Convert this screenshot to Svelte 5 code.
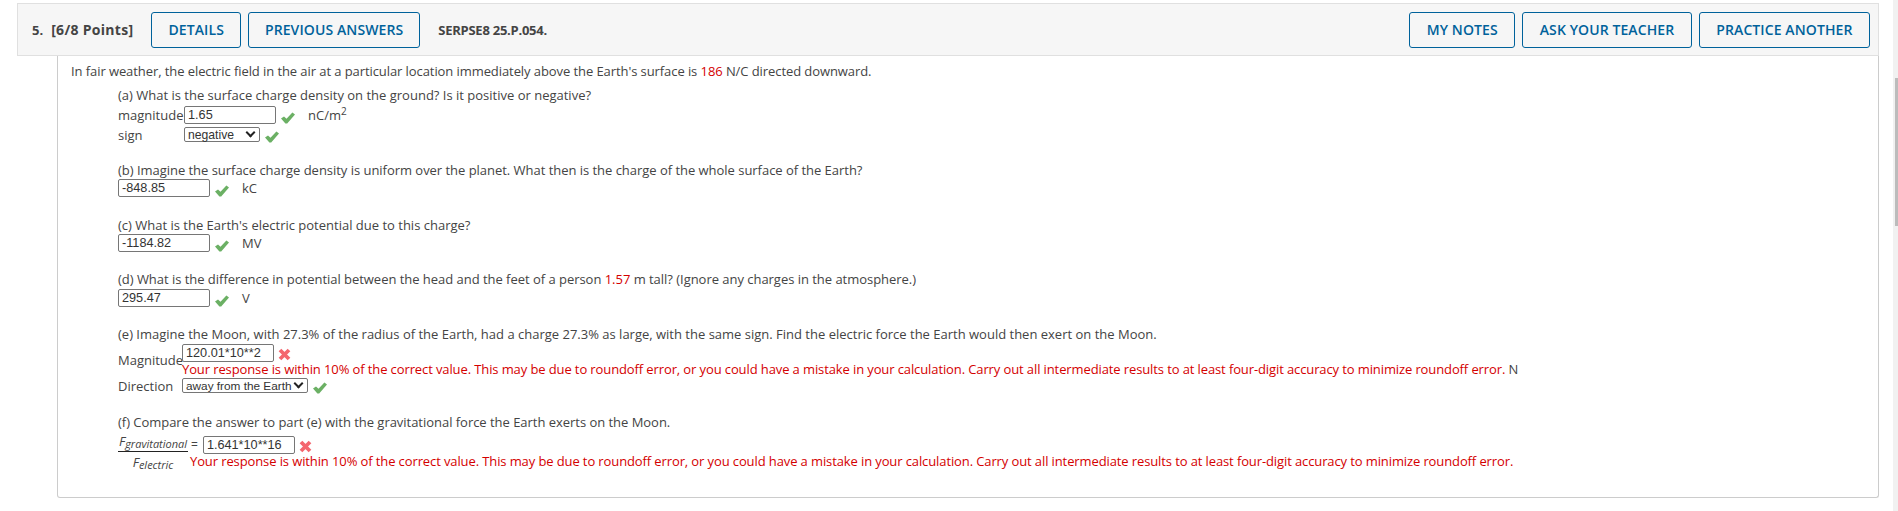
<script>
	const errorText =
		"Your response is within 10% of the correct value. This may be due to roundoff error, or you could have a mistake in your calculation. Carry out all intermediate results to at least four-digit accuracy to minimize roundoff error.";
</script>

{#snippet check()}
	<svg class="mark ok" width="14" height="12" viewBox="0 0 14 12">
		<path d="M0 6.6 L3 4.4 L5.5 6.8 L11.4 0.4 L14 2.4 L6.2 11.6 L4.4 11.6 Z" fill="#6bb064" />
	</svg>
{/snippet}

{#snippet cross()}
	<svg class="mark bad" width="13" height="13" viewBox="0 0 13 13">
		<path d="M2 2 L11 11 M11 2 L2 11" stroke="#f4666e" stroke-width="3.8" />
	</svg>
{/snippet}

<div class="page">
	<main>
		<header>
			<span class="num">5.</span>
			<span class="points">[6/8 Points]</span>
			<button class="details">DETAILS</button>
			<button class="prev">PREVIOUS ANSWERS</button>
			<span class="code">SERPSE8 25.P.054.</span>
			<div class="actions">
				<button>MY NOTES</button>
				<button>ASK YOUR TEACHER</button>
				<button>PRACTICE ANOTHER</button>
			</div>
		</header>

		<section class="body">
			<p class="intro">
				In fair weather, the electric field in the air at a particular location immediately above the Earth's surface is <span class="red">186</span> N/C directed downward.
			</p>

			<div class="part a">
				<p>(a) What is the surface charge density on the ground? Is it positive or negative?</p>
				<div class="row mag-row">
					<span class="label">magnitude</span>
					<span class="input">1.65</span>
					{@render check()}
					<span class="unit">nC/m<sup>2</sup></span>
				</div>
				<div class="row sign-row">
					<span class="label">sign</span>
					<span class="select w-76">negative<i class="caret"></i></span>
					{@render check()}
				</div>
			</div>

			<div class="part b">
				<p>(b) Imagine the surface charge density is uniform over the planet. What then is the charge of the whole surface of the Earth?</p>
				<div class="row tight">
					<span class="input">-848.85</span>
					{@render check()}
					<span class="unit">kC</span>
				</div>
			</div>

			<div class="part c">
				<p>(c) What is the Earth's electric potential due to this charge?</p>
				<div class="row tight">
					<span class="input">-1184.82</span>
					{@render check()}
					<span class="unit">MV</span>
				</div>
			</div>

			<div class="part d">
				<p>(d) What is the difference in potential between the head and the feet of a person <span class="red">1.57</span> m tall? (Ignore any charges in the atmosphere.)</p>
				<div class="row">
					<span class="input">295.47</span>
					{@render check()}
					<span class="unit">V</span>
				</div>
			</div>

			<div class="part e">
				<p>(e) Imagine the Moon, with 27.3% of the radius of the Earth, had a charge 27.3% as large, with the same sign. Find the electric force the Earth would then exert on the Moon.</p>
				<div class="answer">
					<span class="label mag">Magnitude</span>
					<div>
						<div class="inline">
							<span class="input">120.01*10**2</span>
							{@render cross()}
						</div>
						<div class="error">{errorText} <span class="n">N</span></div>
					</div>
				</div>
				<div class="row dir">
					<span class="label">Direction</span>
					<span class="select w-126">away from the Earth<i class="caret"></i></span>
					{@render check()}
				</div>
			</div>

			<div class="part f">
				<p>(f) Compare the answer to part (e) with the gravitational force the Earth exerts on the Moon.</p>
				<div class="fraction-row">
					<div class="fraction">
						<div class="top"><i>F<sub>gravitational</sub></i></div>
						<div class="bottom"><i>F<sub>electric</sub></i></div>
					</div>
					<div>
						<div class="inline">
							<span class="eq">=</span>
							<span class="input">1.641*10**16</span>
							{@render cross()}
						</div>
						<div class="error two">{errorText}</div>
					</div>
				</div>
			</div>
		</section>
	</main>
	<aside class="scrollbar"><div class="thumb"></div></aside>
</div>

<style>
	:global(body) {
		margin: 0;
		background: #fff;
	}
	.page {
		display: flex;
		height: 511px;
		overflow: hidden;
		font-family: "Open Sans", sans-serif;
		font-size: 13px;
		line-height: 18px;
		color: #444;
	}
	main {
		flex: 1;
		padding: 3px 14px 0 17px;
	}
	header {
		display: flex;
		align-items: center;
		height: 53px;
		box-sizing: border-box;
		padding: 0 8px 0 14px;
		background: #f6f6f6;
		border: 1px solid #e0e0e0;
		color: #444;
	}
	.num {
		font-size: 13px;
		font-weight: 700;
		margin-right: 8px;
	}
	.points {
		font-size: 14px;
		font-weight: 700;
		letter-spacing: 0.3px;
		margin-right: 18px;
	}
	.details {
		margin-right: 7px;
	}
	.details,
	.prev {
		padding: 0 16px;
	}
	.code {
		font-size: 13px;
		font-weight: 700;
		letter-spacing: -0.25px;
		margin-left: 18px;
	}
	.actions {
		margin-left: auto;
		display: flex;
		gap: 7px;
	}
	button {
		height: 36px;
		padding: 0 16.5px;
		background: transparent;
		border: 1px solid #00629b;
		border-radius: 3px;
		color: #00629b;
		font: 600 14px "Open Sans", sans-serif;
		letter-spacing: 0.1px;
	}
	.body {
		margin-left: 40px;
		height: 442px;
		box-sizing: border-box;
		padding: 7px 0 0 13px;
		border: 1px solid #ccc;
		border-top: none;
		border-radius: 0 0 3px 3px;
	}
	p {
		margin: 0;
		line-height: 16px;
		padding-bottom: 2px;
		letter-spacing: -0.03px;
	}
	.intro {
		letter-spacing: -0.08px;
	}
	.a p,
	.c p,
	.e p {
		letter-spacing: 0;
	}
	.part {
		margin-left: 47px;
	}
	.a { margin-top: 6px; }
	.b { margin-top: 20px; }
	.c { margin-top: 20px; }
	.d { margin-top: 19px; }
	.e { margin-top: 19px; }
	.f { margin-top: 21px; }
	.red {
		color: #d40000;
	}
	.row {
		display: flex;
		align-items: center;
		height: 18px;
	}
	.row.mag-row {
		margin-top: 1px;
	}
	.row.sign-row {
		margin-top: 3px;
		height: 15px;
	}
	.row.tight {
		margin-top: -1px;
	}
	.label {
		width: 66px;
		flex: none;
	}
	.e .label {
		width: 64px;
	}
	.input,
	.select {
		display: inline-flex;
		align-items: center;
		box-sizing: border-box;
		height: 18px;
		padding-left: 3px;
		border: 1px solid #767676;
		border-radius: 2px;
		font: 12.7px "Liberation Sans", sans-serif;
		color: #333;
		background: #fff;
		flex: none;
		width: 92px;
	}
	.select {
		height: 15px;
		position: relative;
		font-size: 11.8px;
	}
	.select.w-76 {
		width: 76px;
		font-size: 12.2px;
	}
	.select.w-126 { width: 126px; }
	.caret {
		position: absolute;
		right: 5px;
		top: 1px;
		width: 5px;
		height: 5px;
		border: solid #222;
		border-width: 0 2px 2px 0;
		transform: rotate(45deg);
	}
	.mark {
		flex: none;
		margin-left: 5px;
	}
	.mark.ok {
		margin-top: 5px;
	}
	.mark.bad {
		margin-top: 3px;
		margin-left: 4px;
	}
	.unit {
		margin-left: 13px;
	}
	sup {
		font-size: 10px;
		line-height: 0;
	}
	.answer {
		display: flex;
	}
	.mag {
		padding-top: 7px;
	}
	.inline {
		display: flex;
		align-items: center;
		height: 18px;
	}
	.error {
		color: #d40000;
		white-space: nowrap;
		line-height: 15px;
		letter-spacing: -0.11px;
	}
	.n {
		color: #444;
	}
	.row.dir {
		margin-top: 1px;
		height: 15px;
	}
	.fraction-row {
		display: flex;
		margin-top: 4px;
	}
	.fraction {
		width: 70px;
		text-align: center;
		flex: none;
		font-size: 13px;
		line-height: 15px;
	}
	.top {
		border-bottom: 1px solid #222;
		height: 15px;
		line-height: 10px;
	}
	.bottom {
		margin-top: 3px;
	}
	sub {
		font-size: 11px;
		line-height: 0;
		vertical-align: -2px;
	}
	.eq {
		margin: 0 5px 0 3px;
		font-size: 12px;
	}
	.error.two {
		margin-left: 2px;
	}
	.scrollbar {
		width: 5px;
		box-sizing: border-box;
		padding-left: 2px;
		background: #f1f1f1;
		flex: none;
	}
	.thumb {
		margin-top: 78px;
		height: 148px;
		background: #bcbcbc;
	}
</style>
